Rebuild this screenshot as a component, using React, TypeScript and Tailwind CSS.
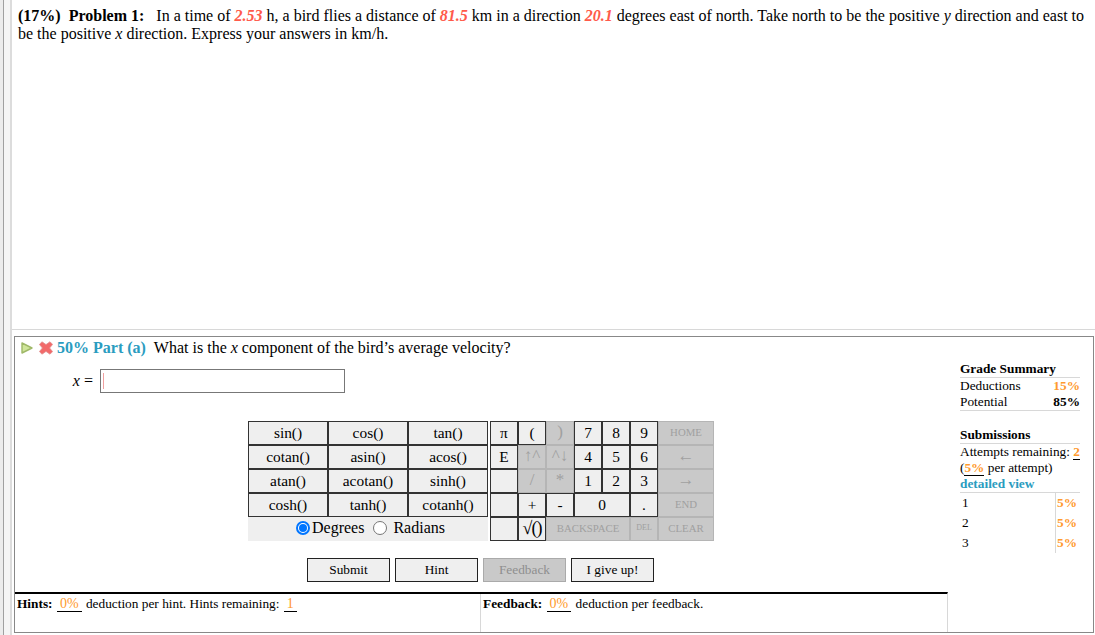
const serif = "font-['Liberation_Serif','Times_New_Roman',serif]";

function Key({ label, w, on = true, small = false, big = false, glyph = false }: { label: string; w: string; on?: boolean; small?: boolean; big?: boolean; glyph?: boolean }) {
  return (
    <div
      className={`${w} h-[24px] shrink-0 flex items-center justify-center border whitespace-nowrap ${
        on ? 'bg-[#efefef] border-[#333] text-black pb-px' : 'bg-[#c9c9c9] border-[#b5b5b5] text-[#a0a0a0] pb-[2px]'
      } ${small ? 'text-[8px]' : big ? 'text-[18px] tracking-[-1px]' : glyph ? 'text-[17px]' : on ? 'text-[15.4px]' : 'text-[10.8px]'}`}
    >
      {label}
    </div>
  );
}

const fnRows = [
  ['sin()', 'cos()', 'tan()'],
  ['cotan()', 'asin()', 'acos()'],
  ['atan()', 'acotan()', 'sinh()'],
  ['cosh()', 'tanh()', 'cotanh()'],
];

function Button({ label, on = true }: { label: string; on?: boolean }) {
  return (
    <div
      className={`w-[83px] h-[24px] flex items-center justify-center text-[13.33px] border ${
        on ? 'bg-[#efefef] border-[#222] text-black' : 'bg-[#c9c9c9] border-[#aaa] text-[#8f8f8f]'
      }`}
    >
      {label}
    </div>
  );
}

function Orange({ children }: { children: React.ReactNode }) {
  return <span className="font-bold text-[#ff9a2e]">{children}</span>;
}

function Under({ children }: { children: React.ReactNode }) {
  return <span className="text-[#ff9a2e] text-[14px] border-b border-black px-[3px] mx-[1px] inline-block leading-[14px]">{children}</span>;
}

export default function App() {
  return (
    <div className={`${serif} w-[1095px] h-[635px] overflow-hidden flex bg-white text-black`}>
      <div className="w-[3px] bg-[#ececec] shrink-0" />
      <div className="w-px bg-[#a0a0a0] shrink-0" />
      <div className="w-[6px] bg-[#f5f5f5] shrink-0" />
      <div className="w-[2px] bg-[#dcdcdc] shrink-0" />
      <div className="flex-1 flex flex-col min-w-0">
        <div className="h-[330px] shrink-0 border-b border-[#d8d8d8] pl-[6px] pt-[7px] text-[16px] leading-[18px]">
          <div className="whitespace-nowrap">
            <b>(17%)&nbsp; Problem 1:</b>&nbsp;&nbsp; In a time of <b className="italic text-[#ff5a4a]">2.53</b> h, a bird flies a distance of{' '}
            <b className="italic text-[#ff5a4a]">81.5</b> km in a direction <b className="italic text-[#ff5a4a]">20.1</b> degrees east of north. Take north to be the positive <i>y</i> direction and east to
          </div>
          <div>be the positive <i>x</i> direction. Express your answers in km/h.</div>
        </div>
        <div className="mt-[6px] ml-[2px] w-[1080px] h-[297px] border border-[#888] flex flex-col relative">
          <div className="flex-1 flex min-h-0">
            <div className="w-[933px] shrink-0 flex flex-col">
              <div className="flex items-center h-[22px] pl-[5px] text-[16px] whitespace-nowrap">
                <svg width="14" height="14" viewBox="0 0 14 14" className="shrink-0">
                  <path d="M2 2 L12 7 L2 12 Z" fill="#cfe59a" stroke="#9fb868" strokeWidth="1.4" strokeLinejoin="round" />
                </svg>
                <svg width="14" height="14" viewBox="0 0 14 14" className="shrink-0 ml-[5px]">
                  <path d="M3 .8 L7 3.6 L11 .8 L13.6 3.4 L10.6 7 L13.6 10.6 L11 13.2 L7 10.4 L3 13.2 L.4 10.6 L3.4 7 L.4 3.4 Z" fill="#f26a6a" stroke="#e09090" strokeWidth=".8" strokeLinejoin="round" />
                </svg>
                <b className="text-[#2a9cc0] ml-[4px]">50% Part (a)</b>
                <span className="ml-[8px]">What is the <i>x</i> component of the bird’s average velocity?</span>
              </div>
              <div className="flex items-center h-[24px] mt-[10px] text-[16px]">
                <span className="w-[85px] text-right pr-[3px] whitespace-nowrap"><i>x</i> =&nbsp;</span>
                <div className="w-[245px] h-[24px] border border-[#777] flex items-center pl-[2px]">
                  <div className="w-px h-[16px] bg-[#f0a0a0]" />
                </div>
              </div>
              <div className="flex mt-[28px] ml-[233px]">
                <div className="w-[240px] bg-[#efefef] h-[120px]">
                  {fnRows.map((r) => (
                    <div key={r[0]} className="flex">
                      {r.map((c) => <Key key={c} label={c} w="w-[80px]" />)}
                    </div>
                  ))}
                  <div className="flex items-center h-[22px] justify-center text-[16px] pl-[5px]">
                    <span className="w-[14px] h-[14px] rounded-full border-[2px] border-[#0075ff] flex items-center justify-center mr-[2px] bg-white"><span className="w-[8px] h-[8px] rounded-full bg-[#0075ff]" /></span>
                    Degrees
                    <span className="w-[14px] h-[14px] rounded-full border border-[#767676] ml-[9px] mr-[6px] bg-white" />
                    Radians
                  </div>
                </div>
                <div className="ml-[2px] flex flex-col">
                  <div className="flex">
                    <Key label="π" w="w-[28px]" /><Key label="(" w="w-[28px]" /><Key label=")" w="w-[28px]" on={false} glyph /><Key label="7" w="w-[28px]" /><Key label="8" w="w-[28px]" /><Key label="9" w="w-[28px]" /><Key label="HOME" w="w-[56px]" on={false} />
                  </div>
                  <div className="flex">
                    <Key label="E" w="w-[28px]" /><Key label="↑^" w="w-[28px]" on={false} glyph /><Key label="^↓" w="w-[28px]" on={false} glyph /><Key label="4" w="w-[28px]" /><Key label="5" w="w-[28px]" /><Key label="6" w="w-[28px]" /><Key label="←" w="w-[56px]" on={false} glyph />
                  </div>
                  <div className="flex">
                    <Key label="" w="w-[28px]" /><Key label="/" w="w-[28px]" on={false} glyph /><Key label="*" w="w-[28px]" on={false} glyph /><Key label="1" w="w-[28px]" /><Key label="2" w="w-[28px]" /><Key label="3" w="w-[28px]" /><Key label="→" w="w-[56px]" on={false} glyph />
                  </div>
                  <div className="flex">
                    <Key label="" w="w-[28px]" /><Key label="+" w="w-[28px]" /><Key label="-" w="w-[28px]" /><Key label="0" w="w-[56px]" /><Key label="." w="w-[28px]" /><Key label="END" w="w-[56px]" on={false} />
                  </div>
                  <div className="flex">
                    <Key label="" w="w-[28px]" /><Key label="√()" w="w-[28px]" big /><Key label="BACKSPACE" w="w-[84px]" on={false} /><Key label="DEL" w="w-[28px]" on={false} small /><Key label="CLEAR" w="w-[56px]" on={false} />
                  </div>
                </div>
              </div>
              <div className="flex gap-[5px] ml-[292px] mt-[17px]">
                <Button label="Submit" />
                <Button label="Hint" />
                <Button label="Feedback" on={false} />
                <Button label="I give up!" />
              </div>
            </div>
            <div className="flex-1 pl-[12px] pr-[14px] pt-[24px] text-[13.33px] leading-[16px]">
              <div className="font-bold border-b border-[#d8d8d8]">Grade Summary</div>
              <div className="flex justify-between"><span>Deductions</span><Orange>15%</Orange></div>
              <div className="flex justify-between border-b border-[#d8d8d8]"><span>Potential</span><b>85%</b></div>
              <div className="font-bold border-b border-[#d8d8d8] mt-[16px]">Submissions</div>
              <div className="whitespace-nowrap">Attempts remaining: <span className="font-bold text-[#ff9a2e] border-b border-black">2</span></div>
              <div>(<span className="font-bold text-[#ff9a2e] border-b border-black">5%</span> per attempt)</div>
              <div className="font-bold text-[#2a9cc0] border-b border-[#d8d8d8]">detailed view</div>
              {['1', '2', '3'].map((n) => (
                <div key={n} className="flex h-[20px] items-center">
                  <span className="w-[96px] pl-[2px] border-r border-[#d8d8d8] h-full flex items-center">{n}</span>
                  <span className="pl-px"><Orange>5%</Orange></span>
                </div>
              ))}
            </div>
          </div>
          <div className="h-[40px] shrink-0 flex text-[13.33px] leading-[16px]">
            <div className="w-[933px] shrink-0 border-t-2 border-black flex border-r border-r-[#d8d8d8]">
              <div className="w-[466px] border-r border-[#d8d8d8] pl-[2px] pt-[2px]">
                <b>Hints:</b> <Under>0%</Under> deduction per hint. Hints remaining: <Under>1</Under>
              </div>
              <div className="flex-1 pl-[2px] pt-[2px]">
                <b>Feedback:</b> <Under>0%</Under> deduction per feedback.
              </div>
            </div>
          </div>
        </div>
      </div>
    </div>
  );
}
